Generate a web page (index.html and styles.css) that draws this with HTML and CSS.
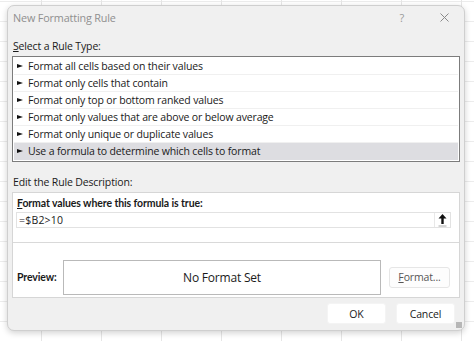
FILE: index.html
```html
<!DOCTYPE html>
<html lang="en">
<head>
    <meta charset="UTF-8">
    <title>New Formatting Rule</title>
    <link rel="stylesheet" href="styles.css">
</head>
<body>
    <div class="dialog">
        <div class="titlebar">
            <span class="title">New Formatting Rule</span>
            <span class="help">?</span>
            <span class="close">
                <svg width="9" height="9" viewBox="0 0 9 9"><path d="M0.5 0.5L8.5 8.5M8.5 0.5L0.5 8.5" stroke="#8a8a8a" stroke-width="1" fill="none"/></svg>
            </span>
        </div>

        <div class="content">
            <div class="label"><u>S</u>elect a Rule Type:</div>
            <ul class="rule-list">
                <li>Format all cells based on their values</li>
                <li>Format only cells that contain</li>
                <li>Format only top or bottom ranked values</li>
                <li>Format only values that are above or below average</li>
                <li>Format only unique or duplicate values</li>
                <li class="selected">Use a formula to determine which cells to format</li>
            </ul>

            <div class="label label-desc">Edit the Rule Description:</div>
            <div class="desc-panel">
                <div class="formula-section">
                    <div class="bold-label"><u>F</u>ormat values where this formula is true:</div>
                    <div class="formula-input">
                        <span class="formula-text">=$B2&gt;10</span>
                        <span class="collapse-btn">
                            <svg width="11" height="14" viewBox="0 0 11 14"><path d="M5.5 1L1.5 5.5H4.3V11H6.7V5.5H9.5Z" fill="#111"/><path d="M1.5 13H9.5" stroke="#aaa" stroke-width="1"/></svg>
                        </span>
                    </div>
                </div>
                <div class="preview-section">
                    <div class="bold-label preview-label">Preview:</div>
                    <div class="preview-box">No Format Set</div>
                    <div class="btn btn-format"><u>F</u>ormat...</div>
                </div>
            </div>

            <div class="actions">
                <div class="btn btn-main">OK</div>
                <div class="btn btn-main">Cancel</div>
            </div>
        </div>
        <span class="grip"></span>
    </div>
</body>
</html>
```

FILE: styles.css
```css
body {
    margin: 0;
    height: 341px;
    overflow: hidden;
    font-family: 'Open Sans', 'Noto Sans', sans-serif;
    font-size: 10.5px;
    letter-spacing: -0.15px;
    color: #1a1a1a;
    background-color: #fff;
    background-image:
        repeating-linear-gradient(90deg, transparent 0, transparent 41px, #e6e6e6 41px, #e6e6e6 42px, transparent 42px, transparent 60px),
        repeating-linear-gradient(0deg, transparent 0, transparent 19px, #ececec 19px, #ececec 20px);
    padding-top: 5px;
    box-sizing: border-box;
}
.dialog {
    position: relative;
    margin-left: 7px;
    width: 458px;
    height: 326px;
    box-sizing: border-box;
    background-color: #f0f0f0;
    border: 1px solid #cfcfcf;
    border-radius: 7px;
    box-shadow: 0 2px 6px rgba(0,0,0,0.18);
}
.titlebar {
    display: flex;
    align-items: center;
    height: 23px;
    padding: 0 15px 0 5px;
}
.title {
    flex: 1;
    color: #8f8f8f;
    font-size: 10.8px;
}
.help {
    color: #9a9a9a;
    font-size: 11px;
    margin-right: 36px;
}
.close {
    display: flex;
}
.content {
    padding: 0 4px;
}
.label {
    margin-top: 9px;
    line-height: 16px;
    padding-left: 1px;
}
.label-desc {
    margin-top: 12px;
}
.rule-list {
    list-style: none;
    margin: 2px 0 0;
    padding: 1px;
    border: 1px solid #7c7c7c;
    background-color: #fff;
}
.rule-list li {
    height: 17px;
    line-height: 16px;
    padding-left: 14px;
    position: relative;
    border-bottom: 1px solid #f0f0f0;
    box-sizing: border-box;
}
.rule-list li::before {
    content: '';
    position: absolute;
    left: 3px;
    top: 6px;
    border-left: 6px solid #111;
    border-top: 2.5px solid transparent;
    border-bottom: 2.5px solid transparent;
}
.rule-list li.selected {
    background-color: #dddde1;
    border-bottom: none;
}
.desc-panel {
    margin-top: 2px;
    background-color: #fff;
    border: 1px solid #d6d6d6;
}
.formula-section {
    height: 50px;
    padding: 2px 8px 0 4px;
    border-bottom: 1px solid #d9d9d9;
    box-sizing: border-box;
}
.bold-label {
    font-family: 'Lato', 'Open Sans', sans-serif;
    font-size: 10.5px;
    font-weight: bold;
    letter-spacing: -0.1px;
    line-height: 16px;
}
.formula-input {
    display: flex;
    align-items: center;
    height: 16px;
    margin: 1px 0 0 -1px;
    border: 1px solid #e2e2e2;
    box-sizing: border-box;
}
.formula-text {
    flex: 1;
    padding-left: 2px;
    letter-spacing: 0.2px;
}
.collapse-btn {
    display: flex;
    justify-content: center;
    width: 15px;
    height: 14px;
    border-left: 1px solid #e8e8e8;
}
.preview-section {
    display: flex;
    align-items: center;
    height: 54px;
    padding: 16px 9px 2px 4px;
    box-sizing: border-box;
}
.preview-label {
    width: 46px;
    letter-spacing: -0.1px;
}
.preview-box {
    width: 318px;
    height: 35px;
    box-sizing: border-box;
    border: 1px solid #b9b9b9;
    display: flex;
    align-items: center;
    justify-content: center;
    font-size: 12px;
    letter-spacing: -0.2px;
}
.btn {
    display: flex;
    align-items: center;
    justify-content: center;
    box-sizing: border-box;
    border: 1px solid #e6e6e6;
    border-radius: 3px;
    background-color: #fdfdfd;
}
.btn-format {
    margin-left: 8px;
    width: 61px;
    height: 21px;
    color: #555;
}
.actions {
    display: flex;
    justify-content: flex-end;
    gap: 10px;
    margin-top: 5px;
    padding-right: 5px;
}
.btn-main {
    width: 59px;
    height: 21px;
    border-color: #f4f4f4;
    background-color: #fff;
}
.grip {
    position: absolute;
    right: 2px;
    bottom: 2px;
    width: 6px;
    height: 6px;
    background-image: radial-gradient(circle, #b5b5b5 0.7px, transparent 1px);
    background-size: 2px 2px;
}
```
